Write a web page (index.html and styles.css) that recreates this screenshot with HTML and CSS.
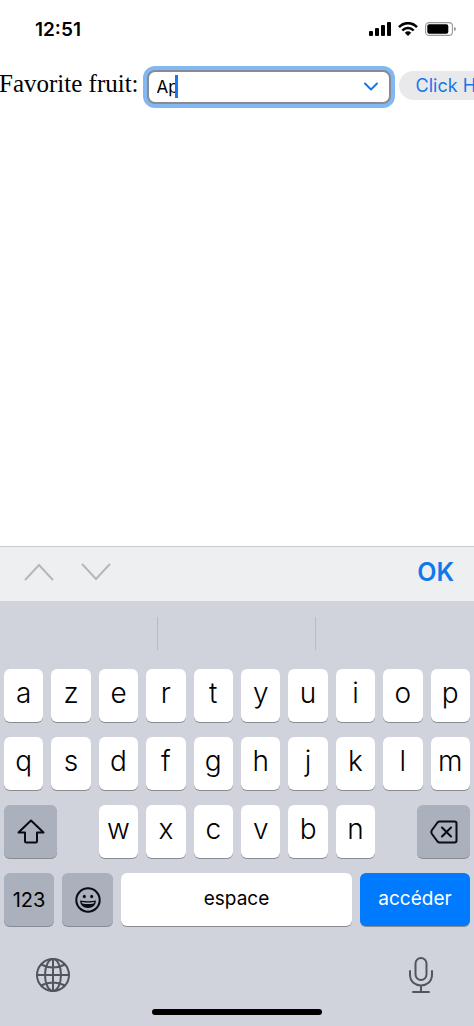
FILE: index.html
```html
<!DOCTYPE html>
<html lang="fr">
<head>
<meta charset="utf-8">
<meta name="viewport" content="width=device-width, initial-scale=1">
<title>Favorite fruit</title>
<link rel="stylesheet" href="styles.css">
</head>
<body>
<div class="screen">
  <header class="status">
    <time class="clock">12:51</time>
    <div class="indicators">
      <svg width="22" height="14" viewBox="0 0 22 14" aria-label="Signal"><rect x="0" y="9" width="4" height="5" rx="1"/><rect x="6" y="6" width="4" height="8" rx="1"/><rect x="12" y="3" width="4" height="11" rx="1"/><rect x="18" y="0" width="4" height="14" rx="1"/></svg>
      <svg width="20" height="14" viewBox="0 0 20 14" aria-label="Wi-Fi"><g fill="none" stroke="#000" stroke-width="2.5"><path d="M1 5.2C6-.2 14-.2 19 5.2"/><path d="M4.300 8.500C7.500 5.200 12.500 5.200 15.700 8.500"/></g><path d="M6.800 10.700Q10 8 13.200 10.700L10 14Z"/></svg>
      <svg width="31" height="14" viewBox="0 0 31 14" aria-label="Batterie"><rect x=".6" y=".6" width="26.800" height="12.800" rx="3.500" fill="none" stroke="#999" stroke-width="1.100"/><rect x="2.300" y="2.300" width="21" height="9.400" rx="2"/><path d="M29 5Q31 5.500 31 7T29 9Z" fill="#999"/></svg>
    </div>
  </header>

  <main class="page">
    <form class="fruit-form">
      <label class="label" for="fruit">Favorite fruit:</label>
      <div class="field">
        <input class="fruit" id="fruit" type="text" value="Ap" autocomplete="off">
        <span class="caret"></span>
        <button class="toggle" type="button" aria-label="Suggestions"><svg width="16" height="10" viewBox="0 0 16 10"><path d="M2 1.500 8 7.500 14 1.500"/></svg></button>
      </div>
      <button class="submit" type="button">Click Here</button>
    </form>
  </main>

  <section class="keyboard" aria-label="Clavier">
    <div class="accessory">
      <button class="step" type="button" aria-label="Précédent"><svg width="30" height="18" viewBox="0 0 30 18"><path d="M1.500 16.500 15 2 28.500 16.500"/></svg></button>
      <button class="step" type="button" aria-label="Suivant"><svg width="30" height="18" viewBox="0 0 30 18"><path d="M1.500 1.500 15 16 28.500 1.500"/></svg></button>
      <button class="ok" type="button">OK</button>
    </div>
    <div class="suggestions"><span></span><span></span><span></span></div>
    <div class="keys">
      <div class="row">
        <button class="key">a</button><button class="key">z</button><button class="key">e</button><button class="key">r</button><button class="key">t</button><button class="key">y</button><button class="key">u</button><button class="key">i</button><button class="key">o</button><button class="key">p</button>
      </div>
      <div class="row">
        <button class="key">q</button><button class="key">s</button><button class="key">d</button><button class="key">f</button><button class="key">g</button><button class="key">h</button><button class="key">j</button><button class="key">k</button><button class="key">l</button><button class="key">m</button>
      </div>
      <div class="row">
        <button class="key dark shift" aria-label="Majuscule"><svg width="28" height="25" viewBox="0 0 28 25"><path d="M14 1.500 26.500 13.500H20V22Q20 23.500 18.500 23.500H9.500Q8 23.500 8 22V13.500H1.500Z"/></svg></button>
        <button class="key">w</button><button class="key">x</button><button class="key">c</button><button class="key">v</button><button class="key">b</button><button class="key">n</button>
        <button class="key dark delete" aria-label="Effacer"><svg width="28" height="24" viewBox="0 0 28 24"><path d="M9.500 1.500H24.500Q26.500 1.500 26.500 3.500V20.500Q26.500 22.500 24.500 22.500H9.500Q8.500 22.500 7.500 21.500L2 14Q.7 12 2 10L7.500 2.500Q8.500 1.500 9.500 1.500ZM12 7.500 21 16.500M21 7.500 12 16.500"/></svg></button>
      </div>
      <div class="bottom-row">
        <button class="key dark word numbers">123</button>
        <button class="key dark" aria-label="Emoji"><svg width="26" height="26" viewBox="0 0 26 26"><circle cx="13" cy="13" r="11.700"/><g fill="#080b12" stroke="none"><ellipse cx="9.300" cy="9.500" rx="1.500" ry="1.800"/><ellipse cx="16.700" cy="9.500" rx="1.500" ry="1.800"/><path d="M5 13.500Q13 15 21 13.500Q20.500 21 13 21T5 13.500Z"/></g><path d="M7.500 15.700Q13 16.800 18.500 15.700" stroke="#aab0bc" stroke-width="1.400"/></svg></button>
        <button class="key word">espace</button>
        <button class="key go word">accéder</button>
      </div>
    </div>
    <div class="system">
      <button class="tool" aria-label="Changer de langue"><svg width="34" height="34" viewBox="0 0 34 34"><circle cx="17" cy="17" r="16"/><ellipse cx="17" cy="17" rx="8" ry="16"/><path d="M17 1V33M1 17H33M5 6.500Q17 12.500 29 6.500M5 27.500Q17 21.500 29 27.500"/></svg></button>
      <button class="tool" aria-label="Dictée"><svg width="24" height="36" viewBox="0 0 24 36"><rect x="6.500" y="1" width="11" height="22" rx="5.500"/><path d="M1 14V17.500C1 32 23 32 23 17.500V14M12 28.500V35M4 35H20"/></svg></button>
    </div>
    <div class="home"></div>
  </section>
</div>
</body>
</html>
```
FILE: styles.css
```css
* {
  box-sizing: border-box;
}

body {
  margin: 0;
  background: #fff;
  color: #000;
  font-family: Inter, "Liberation Sans", sans-serif;
}

button {
  padding: 0;
  border: 0;
  background: none;
  color: inherit;
  font: inherit;
}

svg {
  display: block;
}

.screen {
  display: flex;
  flex-direction: column;
  min-height: 100vh;
  overflow: hidden;
}

.status {
  display: flex;
  align-items: center;
  justify-content: space-between;
  height: 58px;
  padding: 0 18px 0 35px;
}

.clock {
  font-size: 19px;
  font-weight: 600;
}

.indicators {
  display: flex;
  gap: 7px;
}

.page {
  flex: 1;
  padding-top: 12px;
  overflow: hidden;
}

.fruit-form {
  display: flex;
  align-items: flex-start;
  gap: 8px;
  margin-left: -1px;
}

.label {
  font-family: "Liberation Serif", serif;
  font-size: 25px;
  line-height: 28px;
  white-space: nowrap;
}

.field {
  position: relative;
  display: flex;
  flex: none;
  width: 244px;
  height: 34px;
  padding-right: 10px;
  border: 2px solid #858c96;
  border-radius: 8px;
  background: #fff;
  box-shadow: 0 0 0 4px #82b7f2;
}

.fruit {
  flex: 1;
  width: 100%;
  min-width: 0;
  padding: 0 0 0 8px;
  border: 0;
  outline: 0;
  background: none;
  font: 17px Inter, sans-serif;
}

.caret {
  position: absolute;
  top: 3px;
  left: 26px;
  width: 3px;
  height: 23px;
  background: #1678f2;
}

.toggle svg {
  fill: none;
  stroke: #1678e8;
  stroke-width: 2;
  stroke-linecap: round;
  stroke-linejoin: round;
}

.submit {
  flex: none;
  height: 29px;
  margin-top: 1px;
  padding: 0 17px;
  border-radius: 15px;
  background: #e9e9eb;
  color: #1678e8;
  font-size: 18px;
}

.keyboard {
  background: #d0d3db;
}

.accessory {
  display: flex;
  align-items: center;
  gap: 27px;
  height: 55px;
  padding: 0 20px 4px 24px;
  border-top: 1px solid #c8cacd;
  background: #edeff1;
}

.step svg {
  fill: none;
  stroke: #b5b7ba;
  stroke-width: 2;
  stroke-linecap: round;
}

.ok {
  margin-left: auto;
  color: #1078ea;
  font-size: 25px;
  font-weight: 600;
}

.suggestions {
  display: grid;
  grid-template-columns: repeat(3, 1fr);
  height: 68px;
  padding: 16px 0 19px;
}

.suggestions span:not(:last-child) {
  border-right: 1px solid #b8bbc3;
}

.keys {
  display: grid;
  gap: 15px;
  padding: 0 4px;
}

.row {
  display: grid;
  grid-template-columns: repeat(10, 1fr);
  gap: 8px;
}

.bottom-row {
  display: grid;
  grid-template-columns: 50px 51px 1fr 110px;
  gap: 8px;
}

.key {
  display: flex;
  align-items: center;
  justify-content: center;
  height: 53px;
  padding-bottom: 6px;
  border-radius: 6px;
  background: #fff;
  box-shadow: 0 1px 0 #888b91;
  font-size: 28px;
  font-weight: 350;
}

.key.dark {
  padding-bottom: 0;
  background: #aab0bc;
}

.key svg {
  fill: none;
  stroke: #080b12;
  stroke-width: 2;
  stroke-linejoin: round;
  stroke-linecap: round;
}

.shift {
  grid-column: span 2;
  width: 53px;
}

.delete {
  grid-column: 9 / span 2;
  justify-self: end;
  width: 53px;
}

.key.word {
  padding-bottom: 2px;
  font-size: 19px;
  font-weight: 400;
}

.key.numbers {
  padding-bottom: 0;
  font-size: 20px;
}

.key.go {
  background: #007aff;
  color: #fff;
}

.system {
  display: flex;
  align-items: center;
  justify-content: space-between;
  height: 83px;
  padding: 14px 41px 0 36px;
}

.tool svg {
  fill: none;
  stroke: #51555e;
  stroke-width: 2;
  stroke-linecap: round;
}

.home {
  width: 170px;
  height: 6px;
  margin: 0 auto 11px;
  border-radius: 3px;
  background: #000;
}
```
